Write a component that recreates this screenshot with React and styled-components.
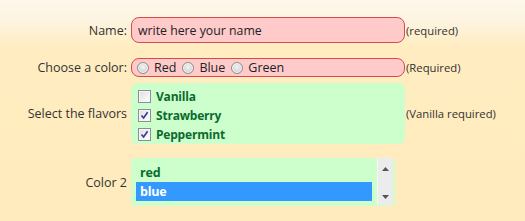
import React from "react";
import styled, { createGlobalStyle } from "styled-components";

const Global = createGlobalStyle`
  html, body { margin: 0; padding: 0; }
  body {
    width: 525px;
    height: 221px;
    overflow: hidden;
    font-family: "Open Sans", "Noto Sans", sans-serif;
    font-size: 12.5px;
    color: #333;
    background: linear-gradient(#fdf8ec 0px, #fdf4df 22px, #ffecc0 48px, #ffebbd 100%);
  }
`;

const Form = styled.form`
  display: flex;
  flex-direction: column;
  padding-top: 17px;
`;

const Row = styled.div`
  display: flex;
  align-items: center;
  margin-top: ${(p) => p.$gap || 0}px;
`;

const Label = styled.label`
  width: 127px;
  padding-right: 4px;
  text-align: right;
  color: #333;
  flex: none;
`;

const Note = styled.span`
  margin-left: 1px;
  font-size: 11.3px;
  color: #333;
`;

const TextInput = styled.input`
  box-sizing: border-box;
  width: 274px;
  height: 26px;
  margin: 0;
  padding: 0 6px;
  border: 1px solid #d94a4a;
  border-radius: 8px;
  background: #ffcaca;
  font: inherit;
  font-size: 12.3px;
  color: #222;
  outline: none;
`;

const RadioGroup = styled.div`
  box-sizing: border-box;
  width: 274px;
  height: 19px;
  display: flex;
  align-items: center;
  padding-left: 5px;
  border: 1px solid #d94a4a;
  border-radius: 8px;
  background: #ffcaca;
  color: #222;
`;

const RadioItem = styled.label`
  display: flex;
  align-items: center;
  gap: 5px;
  margin-right: 6px;
`;

const RadioDot = styled.span`
  box-sizing: border-box;
  width: 12px;
  height: 12px;
  border-radius: 50%;
  border: 1px solid #8e8e8e;
  background: radial-gradient(circle at 50% 40%, #f4f4f4 0%, #d8d8d8 55%, #c2c2c2 100%);
  box-shadow: inset 0 0 0 1px #f8f8f8;
`;

const FlavorBox = styled.div`
  box-sizing: border-box;
  width: 274px;
  height: 61px;
  display: flex;
  flex-direction: column;
  padding: 4px 0 0 7px;
  border-radius: 6px;
  background: #ccffcc;
`;

const CheckItem = styled.label`
  display: flex;
  align-items: center;
  gap: 5px;
  height: 19px;
  font-weight: 700;
  font-size: 12px;
  letter-spacing: -0.2px;
  color: #0b6a2e;
`;

const CheckBox = styled.span`
  box-sizing: border-box;
  width: 13px;
  height: 13px;
  border: 1px solid #8d8d97;
  background: linear-gradient(135deg, #dcdcdc 0%, #f2f2f2 60%, #ffffff 100%);
  box-shadow: inset 0 0 0 1px #f6f6f6;
  display: flex;
  align-items: center;
  justify-content: center;
`;

const ListBox = styled.div`
  box-sizing: border-box;
  width: 264px;
  height: 48px;
  display: flex;
  padding: 5px 2px 2px 5px;
  border-radius: 4px;
  background: #ccffcc;
`;

const Options = styled.div`
  flex: 1;
  display: flex;
  flex-direction: column;
  margin-right: 5px;
`;

const Option = styled.div`
  height: 19px;
  line-height: 19px;
  padding-left: 4px;
  font-weight: 700;
  font-size: 12.5px;
  letter-spacing: -0.2px;
  color: ${(p) => (p.$selected ? "#ffffff" : "#0b6a2e")};
  background: ${(p) => (p.$selected ? "#3399ff" : "transparent")};
`;

const ScrollBar = styled.div`
  width: 16px;
  margin-top: -5px;
  margin-bottom: -1px;
  display: flex;
  flex-direction: column;
  justify-content: space-between;
  align-items: center;
  padding: 9px 0 6px;
  box-sizing: border-box;
  background: #ececec;
  border-left: 1px solid #f6f6f6;
`;

const Arrow = ({ down }) => (
  <svg width="7" height="4" viewBox="0 0 7 4">
    <path d={down ? "M0 0 L7 0 L3.5 4 Z" : "M3.5 0 L7 4 L0 4 Z"} fill="#555" />
  </svg>
);

const Check = () => (
  <svg width="9" height="9" viewBox="0 0 9 9">
    <path d="M1.5 4.5 L3.6 7 L7.6 1.2" fill="none" stroke="#2b3c8e" strokeWidth="1.6" />
  </svg>
);

const flavors = [
  { name: "Vanilla", checked: false },
  { name: "Strawberry", checked: true },
  { name: "Peppermint", checked: true },
];

export default function App() {
  return (
    <>
      <Global />
      <Form>
        <Row>
          <Label>Name:</Label>
          <TextInput defaultValue="write here your name" />
          <Note>(required)</Note>
        </Row>
        <Row $gap={15}>
          <Label>Choose a color:</Label>
          <RadioGroup>
            {["Red", "Blue", "Green"].map((c) => (
              <RadioItem key={c}>
                <RadioDot />
                {c}
              </RadioItem>
            ))}
          </RadioGroup>
          <Note>(Required)</Note>
        </Row>
        <Row $gap={6}>
          <Label>Select the flavors</Label>
          <FlavorBox>
            {flavors.map((f) => (
              <CheckItem key={f.name}>
                <CheckBox>{f.checked && <Check />}</CheckBox>
                {f.name}
              </CheckItem>
            ))}
          </FlavorBox>
          <Note>(Vanilla required)</Note>
        </Row>
        <Row $gap={14}>
          <Label>Color 2</Label>
          <ListBox>
            <Options>
              <Option>red</Option>
              <Option $selected>blue</Option>
            </Options>
            <ScrollBar>
              <Arrow />
              <Arrow down />
            </ScrollBar>
          </ListBox>
        </Row>
      </Form>
    </>
  );
}
